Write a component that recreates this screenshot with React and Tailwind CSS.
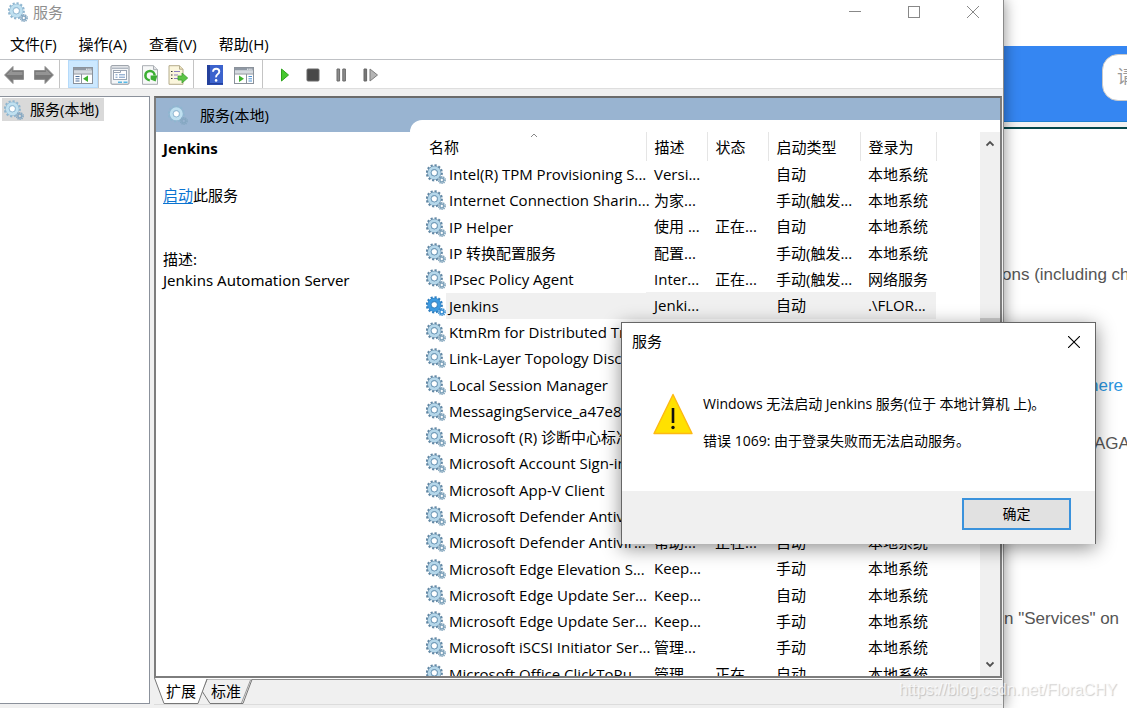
const services = [
  { name: "Intel(R) TPM Provisioning S...", desc: "Versi...", status: "", start: "自动", logon: "本地系统" },
  { name: "Internet Connection Sharin...", desc: "为家...", status: "", start: "手动(触发...", logon: "本地系统" },
  { name: "IP Helper", desc: "使用 ...", status: "正在...", start: "自动", logon: "本地系统" },
  { name: "IP 转换配置服务", desc: "配置...", status: "", start: "手动(触发...", logon: "本地系统" },
  { name: "IPsec Policy Agent", desc: "Inter...", status: "正在...", start: "手动(触发...", logon: "网络服务" },
  { name: "Jenkins", desc: "Jenki...", status: "", start: "自动", logon: ".\\FLOR...", selected: true },
  { name: "KtmRm for Distributed Tra", desc: "", status: "", start: "", logon: "" },
  { name: "Link-Layer Topology Disco", desc: "", status: "", start: "", logon: "" },
  { name: "Local Session Manager", desc: "", status: "", start: "", logon: "" },
  { name: "MessagingService_a47e8", desc: "", status: "", start: "", logon: "" },
  { name: "Microsoft (R) 诊断中心标准", desc: "", status: "", start: "", logon: "" },
  { name: "Microsoft Account Sign-in", desc: "", status: "", start: "", logon: "" },
  { name: "Microsoft App-V Client", desc: "", status: "", start: "", logon: "" },
  { name: "Microsoft Defender Antivir", desc: "", status: "", start: "", logon: "" },
  { name: "Microsoft Defender Antivir...", desc: "帮助...", status: "正在...", start: "自动", logon: "本地系统" },
  { name: "Microsoft Edge Elevation S...", desc: "Keep...", status: "", start: "手动", logon: "本地系统" },
  { name: "Microsoft Edge Update Ser...", desc: "Keep...", status: "", start: "自动", logon: "本地系统" },
  { name: "Microsoft Edge Update Ser...", desc: "Keep...", status: "", start: "手动", logon: "本地系统" },
  { name: "Microsoft iSCSI Initiator Ser...", desc: "管理...", status: "", start: "手动", logon: "本地系统" },
  { name: "Microsoft Office ClickToRu...", desc: "管理...", status: "正在...", start: "自动", logon: "本地系统" },
];

function Gears({ tone = "normal" }) {
  const tones = {
    normal: { edge: "#6288a5", body: "#b5d7ea", inner: "#5e8fb2", small: "#7fa3bb" },
    active: { edge: "#2f7fc0", body: "#3d9ae0", inner: "#2a77b8", small: "#3a8fd2" },
    pale: { edge: "#8fb6d0", body: "#bfe0f0", inner: "#88b2cf", small: "#86a8c2" },
  };
  const c = tones[tone];
  return (
    <svg className="size-5 shrink-0" viewBox="0 0 20 20" fill="none" aria-hidden="true">
      <circle cx="8.3" cy="8.8" r="7.4" stroke={c.edge} strokeWidth="2.4" strokeDasharray="2.1 1.775" />
      <circle cx="8.3" cy="8.8" r="4.9" stroke={c.edge} strokeWidth="4.2" />
      <circle cx="8.3" cy="8.8" r="5" stroke={c.body} strokeWidth="3" />
      <circle cx="8.3" cy="8.8" r="3.1" stroke={c.inner} strokeWidth="0.8" fill="#fff" />
      <circle cx="15.8" cy="16" r="3.3" stroke={c.small} strokeWidth="1.6" strokeDasharray="1.3 0.77" />
      <circle cx="15.8" cy="16" r="1.9" stroke={c.small} strokeWidth="1.5" />
    </svg>
  );
}

function ArrowIcon({ flip }) {
  return (
    <svg className={flip ? "h-5 w-5 -scale-x-100" : "h-5 w-5"} viewBox="0 0 20 20" aria-hidden="true">
      <path d="M0.6 10 9 1.5V5.6H19.5V14.4H9V18.5Z" fill="#777" stroke="#8e8e8e" strokeLinejoin="round" />
      <path d="M2.4 10 8.2 4V7H18.5V10Z" fill="#949494" />
    </svg>
  );
}

function PanelIcon({ flip }) {
  return (
    <svg className="size-5" viewBox="0 0 20 20" aria-hidden="true">
      <rect x="0.5" y="2.5" width="19" height="16" fill="#fff" stroke="#8b929b" />
      <rect x="1" y="3" width="18" height="2.6" fill="#8f98a4" />
      <path d="M13 4.2h1.5M15.2 4.2h1.5M17.3 4.2h1" stroke="#fff" />
      <rect x="1" y="5.6" width="18" height="3" fill="#d5dae0" />
      <path d="M0.5 9H19.5" stroke="#8b929b" />
      {flip ? (
        <>
          <path d="M12.5 9V18.5" stroke="#8b929b" />
          <path d="M14.5 11.5h3.5M14.5 13.8h3.5M14.5 16h3.5" stroke="#4d8fd0" />
          <path d="M5 10.5V17L10 13.8Z" fill="#3db12b" />
        </>
      ) : (
        <>
          <path d="M8.5 9V18.5" stroke="#8b929b" />
          <path d="M2.5 11.5h4M2.5 13.8h4M2.5 16h4" stroke="#4d6f9a" />
          <path d="M15 10.5V17L10 13.8Z" fill="#3db12b" />
        </>
      )}
    </svg>
  );
}

function PropertiesIcon() {
  return (
    <svg className="size-5" viewBox="0 0 20 20" aria-hidden="true">
      <rect x="1" y="0.7" width="18" height="18.5" rx="1" fill="#f4f6f8" stroke="#8b929b" />
      <path d="M2 3.2H18" stroke="#aab2bc" strokeWidth="1.4" />
      <rect x="3.5" y="5.5" width="13" height="9" fill="#fff" stroke="#9aa5b4" />
      <path d="M4 7.5H10.5V5.5" stroke="#9aa5b4" fill="none" />
      <path d="M5.5 9.8h2M9 9.8h6M5.5 12.2h2M9 12.2h6" stroke="#6f96c4" />
      <path d="M8 17.2h4M13.5 17.2h4" stroke="#56b8e6" strokeWidth="1.4" />
    </svg>
  );
}

function RefreshIcon() {
  return (
    <svg className="size-5" viewBox="0 0 20 20" aria-hidden="true">
      <path d="M2.5 0.7H13.5L17.5 4.7V19.3H2.5Z" fill="#f7f8f8" stroke="#a9adb2" />
      <path d="M13.5 0.7V4.7H17.5" fill="#e2e4e7" stroke="#a9adb2" />
      <path d="M9.8 15.2A4.6 4.6 0 1 1 14.6 10.6" fill="none" stroke="#3cae33" strokeWidth="2.6" />
      <path d="M10.6 10.4H17.4L15.6 16.4 10.6 14.6Z" fill="#3cae33" />
    </svg>
  );
}

function ExportIcon() {
  return (
    <svg className="size-5" viewBox="0 0 20 20" aria-hidden="true">
      <path d="M1 0.7H11.5L15 4.2V19.3H1Z" fill="#fbf6dc" stroke="#b5ac8c" />
      <path d="M11.5 0.7V4.2H15" fill="#eee4bd" stroke="#b5ac8c" />
      <path d="M3 6.5h1.5M3 10h1.5M3 13.5h1.5" stroke="#333" strokeWidth="1.2" />
      <path d="M6 6.5h6M6 10h4M6 13.5h4" stroke="#8a7fc0" strokeWidth="1.2" />
      <path d="M10 11H14V8L19.7 13 14 18V15H10Z" fill="#5cc545" stroke="#3f9f31" strokeWidth="0.8" />
    </svg>
  );
}

function HelpIcon() {
  return (
    <svg className="h-5 w-4" viewBox="0 0 16 20" aria-hidden="true">
      <rect width="16" height="20" fill="#3c63cd" />
      <rect width="3" height="20" fill="#24409c" />
      <path d="M0 18.8H16" stroke="#24409c" strokeWidth="1.6" />
      <path d="M6 6.8Q6.2 3.8 9.2 3.8T12.3 6.6Q12.3 8.2 10.6 9.3T9.1 12.3" fill="none" stroke="#fff" strokeWidth="1.9" />
      <circle cx="9.1" cy="15.4" r="1.3" fill="#fff" />
    </svg>
  );
}

function Separator() {
  return <span className="h-7 w-px bg-[#c4c4c4]" />;
}

function Tool({ label, children, className }) {
  return (
    <button type="button" aria-label={label} className={`flex h-7 shrink-0 items-center justify-center pt-px ${className}`}>
      {children}
    </button>
  );
}

function Toolbar() {
  return (
    <div role="toolbar" aria-label="工具栏" className="flex h-[30px] shrink-0 items-center border-y border-t-[#bfc1c5] border-b-[#dedede]">
      <Tool label="后退" className="w-7"><ArrowIcon /></Tool>
      <Tool label="前进" className="w-[31px]"><ArrowIcon flip /></Tool>
      <Separator />
      <Tool label="显示/隐藏控制台树" className="ml-2 w-[30px] border border-[#b5dafa] bg-[#cce8ff]"><PanelIcon /></Tool>
      <Separator />
      <Tool label="属性" className="ml-1 w-[34px]"><PropertiesIcon /></Tool>
      <Tool label="刷新" className="w-[26px]"><RefreshIcon /></Tool>
      <Tool label="导出列表" className="w-[30px]"><ExportIcon /></Tool>
      <Separator />
      <Tool label="帮助" className="ml-1 w-[34px]"><HelpIcon /></Tool>
      <Tool label="显示/隐藏操作窗格" className="w-6"><PanelIcon flip /></Tool>
      <span className="w-[6px]" />
      <Separator />
      <Tool label="启动服务" className="ml-2 w-7">
        <svg className="size-4" viewBox="0 0 16 16" aria-hidden="true"><path d="M4.5 2V14L11.5 8Z" fill="#46c82f" stroke="#2da31c" /></svg>
      </Tool>
      <Tool label="停止服务" className="w-7">
        <svg className="size-4" viewBox="0 0 16 16" aria-hidden="true"><rect x="2" y="2" width="12" height="12" rx="1" fill="#484848" stroke="#6b6b6b" /></svg>
      </Tool>
      <Tool label="暂停服务" className="w-7">
        <svg className="size-4" viewBox="0 0 16 16" aria-hidden="true"><path d="M4 2h2.6v12H4zM9.8 2h2.6v12H9.8z" fill="#8c8c8c" stroke="#6b6b6b" /></svg>
      </Tool>
      <Tool label="重新启动服务" className="w-8">
        <svg className="size-4" viewBox="0 0 16 16" aria-hidden="true">
          <path d="M1 2h2.6v12H1z" fill="#777" stroke="#666" />
          <path d="M7 2V14L14.5 8Z" fill="#b5b5b5" stroke="#7d7d7d" />
        </svg>
      </Tool>
    </div>
  );
}

function ServiceTable() {
  const th = "border-r border-[#e5e5e5] p-0 pt-px pl-2 text-left align-middle font-normal";
  const td = "p-0 pl-2 align-middle";
  return (
    <table className="h-[555px] w-[526px] table-fixed border-collapse whitespace-nowrap">
      <colgroup>
        <col className="w-[236px]" />
        <col className="w-[61px]" />
        <col className="w-[61px]" />
        <col className="w-[92px]" />
        <col className="w-[76px]" />
      </colgroup>
      <thead>
        <tr className="h-[29px]">
          <th className="relative border-r border-[#e5e5e5] p-0 pt-px pl-[19px] text-left align-middle font-normal">
            名称
            <svg className="absolute top-0 left-[120px] h-2 w-2" viewBox="0 0 8 8" fill="none" aria-hidden="true">
              <path d="M1 5 4 2 7 5" stroke="#888" />
            </svg>
          </th>
          <th className={th}>描述</th>
          <th className={th}>状态</th>
          <th className={th}>启动类型</th>
          <th className={th}>登录为</th>
        </tr>
      </thead>
      <tbody>
        {services.map((s, i) => (
          <tr key={i} className="h-[26px]">
            <td className="p-0 pl-4">
              <div className="flex h-[26px] items-center">
                <Gears tone={s.selected ? "active" : "normal"} />
                <span className={s.selected ? "h-[26px] flex-1 bg-[#f0f0f0] pl-[3px] leading-[26px]" : "h-[26px] flex-1 pl-[3px] leading-[26px]"}>{s.name}</span>
              </div>
            </td>
            {[s.desc, s.status, s.start, s.logon].map((v, j) => (
              <td key={j} className={s.selected ? `${td} bg-[#f0f0f0]` : td}>{v}</td>
            ))}
          </tr>
        ))}
      </tbody>
    </table>
  );
}

function ServicesWindow() {
  return (
    <main className="relative z-10 flex h-screen min-w-0 flex-1 flex-col border-r border-[#8a8a8a] bg-white shadow-[0_0_14px_rgba(0,0,0,0.45)]">
      <header className="flex h-[30px] shrink-0 items-start pl-2">
        <span className="flex h-6 items-center gap-[5px]">
          <Gears tone="pale" />
          <h1 className="text-[#8f8f8f]">服务</h1>
        </span>
        <span className="ml-auto flex h-6 pr-px">
          <button type="button" aria-label="最小化" className="flex w-[59px] items-center justify-center">
            <svg className="size-3" viewBox="0 0 12 12" aria-hidden="true"><path d="M0 5.5H12" stroke="#888" /></svg>
          </button>
          <button type="button" aria-label="最大化" className="flex w-[59px] items-center justify-center">
            <svg className="size-3" viewBox="0 0 12 12" aria-hidden="true"><rect x="0.5" y="0.5" width="11" height="11" fill="none" stroke="#888" /></svg>
          </button>
          <button type="button" aria-label="关闭" className="flex w-[59px] items-center justify-center">
            <svg className="size-3" viewBox="0 0 12 12" aria-hidden="true"><path d="M0 0 12 12M12 0 0 12" stroke="#888" /></svg>
          </button>
        </span>
      </header>
      <nav aria-label="菜单" className="flex h-[29px] shrink-0 items-center gap-[22px] pl-[10px]">
        <button type="button">文件(F)</button>
        <button type="button">操作(A)</button>
        <button type="button">查看(V)</button>
        <button type="button">帮助(H)</button>
      </nav>
      <Toolbar />
      <div className="flex min-h-0 flex-1 gap-1 bg-[#f0f0f0] pt-[7px]">
        <aside className="mb-1 w-[150px] shrink-0 border-y border-r border-[#8b919b] bg-white pl-[2px] pt-[1px]">
          <button type="button" className="flex h-[23px] items-center gap-[6px] bg-[#d9d9d9] pr-[5px] pl-[2px]">
            <Gears tone="pale" />
            服务(本地)
          </button>
        </aside>
        <div className="flex min-w-0 flex-1 flex-col pr-px">
          <section className="flex min-h-0 flex-1 border-2 border-t-[#6b6b6b] border-l-[#7d7d7d] border-r-[#7d7d7d] border-b-[#7d7d7d] bg-white">
            <div className="w-[254px] shrink-0">
              <div className="flex h-[34px] items-center gap-3 bg-[#99b4d1] pl-3">
                <Gears tone="pale" />
                <span>服务(本地)</span>
              </div>
              <div className="pl-[7px] leading-[21px] font-['Noto_Sans','Noto_Sans_CJK_SC',sans-serif]">
                <h2 className="pt-[6px] font-bold">Jenkins</h2>
                <p className="pt-[26px]">
                  <a href="#start" className="text-[#0b74d1] underline underline-offset-2">启动</a>此服务
                </p>
                <p className="pt-[43px]">描述:</p>
                <p>Jenkins Automation Server</p>
              </div>
            </div>
            <div className="flex min-w-0 flex-1 flex-col">
              <div className="h-[34px] shrink-0 bg-[#99b4d1] pt-[22px]">
                <div className="h-3 rounded-tl-xl bg-white" />
              </div>
              <div className="flex min-h-0 flex-1 justify-between">
                <div className="min-w-0 overflow-hidden"><ServiceTable /></div>
                <div className="flex w-5 shrink-0 flex-col items-center bg-[#f0f0f0]">
                  <svg className="mt-2 size-2" viewBox="0 0 8 8" fill="none" aria-hidden="true"><path d="M0.5 5.5 4 2 7.5 5.5" stroke="#505050" strokeWidth="1.8" /></svg>
                  <span className="mt-[170px] h-24 w-full bg-[#cdcdcd]" />
                  <svg className="mt-auto mb-2 size-2" viewBox="0 0 8 8" fill="none" aria-hidden="true"><path d="M0.5 2.5 4 6 7.5 2.5" stroke="#505050" strokeWidth="1.8" /></svg>
                </div>
              </div>
            </div>
          </section>
          <div role="tablist" className="relative flex h-[30px] shrink-0">
            <svg className="absolute top-0 left-0 h-[30px] w-full" fill="none" aria-hidden="true">
              <path d="M0 0.5H2000" stroke="#fff" />
              <path d="M52 1.5H2000" stroke="#8a8a8a" />
              <path d="M0 26.5H2000" stroke="#dcdcdc" />
              <path d="M53 1.5 48 13 56 25.5H89L98 1.5" stroke="#777" fill="#f0f0f0" />
              <path d="M96.5 2 87.5 25" stroke="#999" />
              <path d="M0.5 0 10 25.5H44L53 1" stroke="#777" fill="#fff" />
            </svg>
            <button type="button" role="tab" aria-selected="true" className="relative h-[26px] w-12 pl-[6px]">扩展</button>
            <button type="button" role="tab" aria-selected="false" className="relative h-[26px] w-12">标准</button>
          </div>
        </div>
      </div>
    </main>
  );
}

function ErrorDialog() {
  return (
    <div role="dialog" aria-labelledby="dlg-title" className="absolute top-[322px] right-[31px] z-20 w-[475px] border border-b-0 border-[#666] bg-white shadow-[0_4px_18px_rgba(0,0,0,0.45)]">
      <div className="flex h-[38px] items-center justify-between pr-[15px] pl-[10px]">
        <h2 id="dlg-title" className="pb-px">服务</h2>
        <button type="button" aria-label="关闭">
          <svg className="size-3" viewBox="0 0 12 12" aria-hidden="true"><path d="M0 0 12 12M12 0 0 12" stroke="#000" strokeWidth="1.1" /></svg>
        </button>
      </div>
      <div className="flex h-[130px] gap-[10px] pt-8 pl-[31px] text-[14px]">
        <svg className="h-[42px] w-10 shrink-0" viewBox="0 0 40 42" aria-hidden="true">
          <path d="M20 1.5 39 40.5H1Z" fill="#ffe100" stroke="#fdb913" strokeWidth="1.4" strokeLinejoin="round" />
          <path d="M20 15V30" stroke="#111" strokeWidth="2.6" />
          <circle cx="20" cy="34.5" r="1.7" fill="#111" />
        </svg>
        <div className="leading-[21px]">
          <p>Windows 无法启动 Jenkins 服务(位于 本地计算机 上)。</p>
          <p className="pt-4">错误 1069: 由于登录失败而无法启动服务。</p>
        </div>
      </div>
      <div className="flex h-[53px] items-start justify-end bg-[#f0f0f0] pt-[7px] pr-6">
        <button type="button" className="h-8 w-[109px] border-2 border-[#3a92dc] bg-[#e1e1e1] pb-px text-[14px]">确定</button>
      </div>
    </div>
  );
}

function BackgroundPage() {
  return (
    <aside className="w-[123px] shrink-0 overflow-hidden whitespace-nowrap bg-white font-['Liberation_Sans','Noto_Sans_CJK_SC',sans-serif] text-[18px] leading-6 text-[#555]">
      <div className="mt-[46px] h-19 border-b border-[#1f7fd0] bg-[#3586f2] pt-2 pl-[98px]">
        <input aria-label="搜索" placeholder="请" className="h-[47px] w-60 rounded-2xl border border-[#c9c9c9] bg-white pl-[14px] placeholder:text-[#999]" />
      </div>
      <div className="h-[7px] border-b-2 border-[#04474a] bg-[#f2f2f2]" />
      <div className="text-[17px]">
        <p className="-indent-0.5 pt-[134px]">ons (including ch</p>
        <p className="pt-[87px] pr-1 text-right"><a href="#here" className="text-[#2b95e0]">here</a></p>
        <p className="pt-[34px] pl-[90px]">AGA</p>
        <p className="pt-[151px]">n "Services" on</p>
      </div>
    </aside>
  );
}

export default function App() {
  return (
    <div className="relative flex h-screen overflow-hidden bg-white font-['Open_Sans','Noto_Sans_CJK_SC',sans-serif] text-[15px] text-black">
      <ServicesWindow />
      <BackgroundPage />
      <ErrorDialog />
      <p className="absolute right-[10px] bottom-2 z-30 font-['Liberation_Sans',sans-serif] text-[16px] leading-5 text-white/70 [text-shadow:1px_1px_1px_rgba(0,0,0,0.2)]">
        https://blog.csdn.net/FloraCHY
      </p>
    </div>
  );
}
